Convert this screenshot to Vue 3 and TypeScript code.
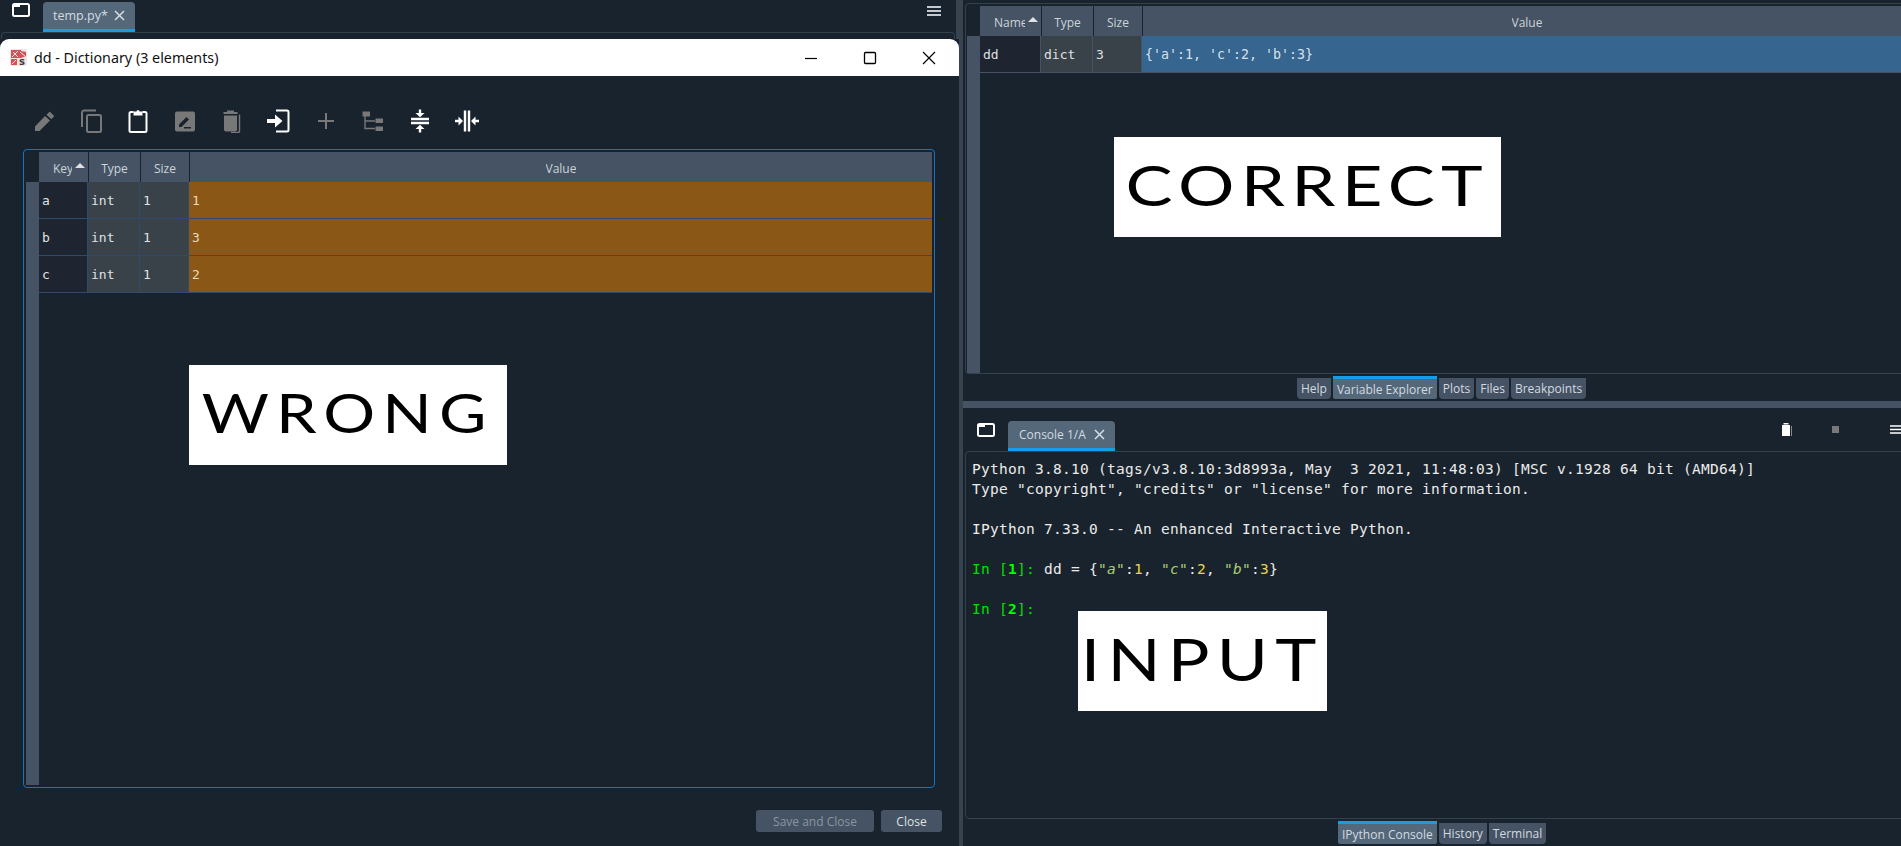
<template>
  <div class="ide">
    <!-- left editor pane, almost fully covered by the dialog -->
    <section class="left-pane">
      <div class="tabbar">
        <svg class="pane-icon" width="18" height="14" viewBox="0 0 18 14">
          <rect x="1" y="1" width="16" height="12" rx="1.5" fill="none" stroke="#fff" stroke-width="2" />
          <rect x="1" y="1" width="7" height="3" fill="#fff" />
        </svg>
        <div class="tab tab-editor">
          <span>temp.py*</span>
          <svg class="tab-close" width="11" height="11" viewBox="0 0 11 11">
            <path d="M1 1l9 9M10 1l-9 9" stroke="#d6dde4" stroke-width="1.5" />
          </svg>
        </div>
        <svg class="menu-icon" width="14" height="10" viewBox="0 0 14 10">
          <path d="M0 1h14M0 5h14M0 9h14" stroke="#fff" stroke-width="1.6" />
        </svg>
      </div>
      <div class="editor-frame"></div>
    </section>

    <div class="vsplit"></div>

    <section class="right-pane">
      <div class="top-area">
        <div class="var-frame">
          <div class="head-row var-cols-head">
            <div class="corner"></div>
            <div v-for="c in varHeaders" :key="c" class="head-cell" :class="{ 'head-value': c === 'Value', 'head-sort': c === 'Name' }">
              <span class="head-label">{{ c }}</span>
              <i v-if="c === 'Name'" class="sort-arrow"></i>
            </div>
          </div>
          <div class="table-body">
            <div class="vhead"></div>
            <div class="rows">
              <div v-for="r in varRows" :key="r.name" class="row var-cols-row">
                <div class="cell cell-key">{{ r.name }}</div>
                <div class="cell cell-meta">{{ r.type }}</div>
                <div class="cell cell-meta">{{ r.size }}</div>
                <div class="cell cell-blue">{{ r.value }}</div>
              </div>
            </div>
          </div>
          <div class="note note-correct"><span>CORRECT</span></div>
        </div>
        <div class="dock-tabs dock-tabs-top">
          <div v-for="t in topTabs" :key="t" class="dock-tab" :class="{ active: t === 'Variable Explorer' }">{{ t }}</div>
        </div>
      </div>

      <div class="hsplit"></div>

      <div class="console-area">
        <div class="tabbar console-bar">
          <svg class="pane-icon" width="18" height="14" viewBox="0 0 18 14">
            <rect x="1" y="1" width="16" height="12" rx="1.5" fill="none" stroke="#fff" stroke-width="2" />
            <rect x="1" y="1" width="7" height="3" fill="#fff" />
          </svg>
          <div class="tab tab-console">
            <span>Console 1/A</span>
            <svg class="tab-close" width="11" height="11" viewBox="0 0 11 11">
              <path d="M1 1l9 9M10 1l-9 9" stroke="#d6dde4" stroke-width="1.5" />
            </svg>
          </div>
          <div class="console-tools">
            <svg width="12" height="15" viewBox="0 0 12 15">
              <path d="M1 3h8v11H1z" fill="#fff" />
              <path d="M2.5 1h5v1.5h-5z" fill="#fff" />
              <path d="M10.500 4v10" stroke="#888" stroke-width="1" />
            </svg>
            <i class="stop-square"></i>
            <svg width="11" height="9" viewBox="0 0 11 9">
              <path d="M0 1h11M0 4.500h11M0 8h11" stroke="#fff" stroke-width="1.400" />
            </svg>
          </div>
        </div>
        <div class="console-frame">
          <pre class="console-text">Python 3.8.10 (tags/v3.8.10:3d8993a, May  3 2021, 11:48:03) [MSC v.1928 64 bit (AMD64)]
Type "copyright", "credits" or "license" for more information.

IPython 7.33.0 -- An enhanced Interactive Python.

<span class="prompt">In [<b>1</b>]:</span> dd = {<em>"a"</em>:<u>1</u>, <em>"c"</em>:<u>2</u>, <em>"b"</em>:<u>3</u>}

<span class="prompt">In [<b>2</b>]:</span></pre>
          <div class="note note-input"><span>INPUT</span></div>
        </div>
        <div class="dock-tabs dock-tabs-bottom">
          <div v-for="t in bottomTabs" :key="t" class="dock-tab" :class="{ active: t === 'IPython Console' }">{{ t }}</div>
        </div>
      </div>
    </section>

    <!-- floating dictionary editor window -->
    <div class="dialog">
      <div class="titlebar">
        <svg class="app-logo" width="17" height="17" viewBox="0 0 17 17">
          <rect width="17" height="17" rx="2" fill="#f6e4e4" />
          <path d="M1 1h10v8H1zM1 10h6v6H1zM11 2l5 1v4l-5 2z" fill="#d0555a" />
          <path d="M2 8l6-6M3 3l5 5M2 15l4-4M10 3l5 4" stroke="#f6e4e4" stroke-width="1" />
          <text x="9" y="16" class="logo-letter">s</text>
        </svg>
        <span class="title-text">dd - Dictionary (3 elements)</span>
        <div class="win-buttons">
          <svg width="14" height="14" viewBox="0 0 14 14"><path d="M1 7.500h12" stroke="#000" stroke-width="1.200" /></svg>
          <svg width="14" height="14" viewBox="0 0 14 14"><rect x="1.500" y="1.500" width="11" height="11" rx="1" fill="none" stroke="#000" stroke-width="1.300" /></svg>
          <svg width="14" height="14" viewBox="0 0 14 14"><path d="M1 1l12 12M13 1L1 13" stroke="#000" stroke-width="1.200" /></svg>
        </div>
      </div>

      <div class="toolbar">
        <!-- edit -->
        <svg class="tool" viewBox="0 0 24 24">
          <path class="off-fill" d="M3 17.500V22h4.500L18 11.500 13 7 3 17.500zM21.700 7.800a1 1 0 0 0 0-1.400l-3.300-3.200a1 1 0 0 0-1.400 0L14.500 5.700l4.800 4.600z" />
        </svg>
        <!-- copy -->
        <svg class="tool" viewBox="0 0 24 24">
          <path class="off-line" d="M17 1.500H5a2 2 0 0 0-2 2V18" />
          <rect class="off-line" x="8" y="6" width="14" height="17" rx="1.500" />
        </svg>
        <!-- paste -->
        <svg class="tool" viewBox="0 0 24 24">
          <path class="on-line" d="M7.500 3H5a1.500 1.500 0 0 0-1.500 1.500v17A1.500 1.500 0 0 0 5 23h14a1.500 1.500 0 0 0 1.500-1.500v-17A1.500 1.500 0 0 0 19 3h-2.500" />
          <path class="on-fill" d="M7.500 2.500h3a1.500 1.500 0 0 1 3 0h3V6.500h-9z" />
        </svg>
        <!-- rename -->
        <svg class="tool" viewBox="0 0 24 24">
          <rect class="off-fill" x="2" y="2.500" width="20" height="20" rx="2" />
          <path d="M6 15.500L13.500 8l2.500 2.500L8.500 18H6z" fill="#19232d" />
          <path d="M11 18h7v1.500h-7z" fill="#19232d" />
        </svg>
        <!-- delete -->
        <svg class="tool" viewBox="0 0 24 24">
          <path class="off-fill" d="M4 6.500h13v14a2 2 0 0 1-2 2H6a2 2 0 0 1-2-2z" />
          <path class="off-fill" d="M3.500 3h14v2h-14zM7 1.500h7V3H7z" />
          <path class="off-thin" d="M19.500 5.500V22a1.500 1.500 0 0 1-1.500 1.500h-7" />
        </svg>
        <!-- insert -->
        <svg class="tool" viewBox="0 0 24 24">
          <path class="on-line" d="M9 1.500h11a1.500 1.500 0 0 1 1.500 1.500v18a1.500 1.500 0 0 1-1.500 1.500H9" />
          <path class="on-fill" d="M0 10h8V5.500L15.500 12 8 18.500V14H0z" />
        </svg>
        <!-- add -->
        <svg class="tool" viewBox="0 0 24 24">
          <path class="off-line" d="M4 12h16M12 4v16" />
        </svg>
        <!-- tree -->
        <svg class="tool" viewBox="0 0 24 24">
          <path class="off-fill" d="M1.500 2.500h7.500v5H1.500zM14.500 9.500H22v4.500h-7.500zM14.500 17.500H22V22h-7.500z" />
          <path class="off-thin" d="M4 7v12.500h10M4 12h10" />
        </svg>
        <!-- collapse -->
        <svg class="tool" viewBox="0 0 24 24">
          <path class="on-thick" d="M3 10h18M3 14h18" />
          <path class="on-fill" d="M10.800 0.500h2.400v3.500h3.300L12 8.200 7.500 4h3.300zM10.800 23.500h2.400V20h3.300L12 15.800 7.500 20h3.300z" />
        </svg>
        <!-- expand -->
        <svg class="tool" viewBox="0 0 24 24">
          <path class="on-thick" d="M10 1.500v21M14 1.500v21" />
          <path class="on-fill" d="M0 10.800h3.500V7.500L8 12l-4.500 4.500v-3.300H0zM24 10.800h-3.500V7.500L16 12l4.500 4.500v-3.300H24z" />
        </svg>
      </div>

      <div class="dict-frame">
        <div class="head-row dict-cols-head">
          <div class="corner"></div>
          <div v-for="c in dictHeaders" :key="c" class="head-cell" :class="{ 'head-value': c === 'Value', 'head-sort': c === 'Key' }">
            <span class="head-label">{{ c }}</span>
            <i v-if="c === 'Key'" class="sort-arrow"></i>
          </div>
        </div>
        <div class="table-body">
          <div class="vhead"></div>
          <div class="rows">
            <div v-for="r in dictRows" :key="r.key" class="row row-dict dict-cols-row">
              <div class="cell cell-key">{{ r.key }}</div>
              <div class="cell cell-meta">{{ r.type }}</div>
              <div class="cell cell-meta">{{ r.size }}</div>
              <div class="cell cell-orange">{{ r.value }}</div>
            </div>
          </div>
        </div>
        <div class="note note-wrong"><span>WRONG</span></div>
      </div>

      <div class="dialog-actions">
        <button class="btn btn-disabled">Save and Close</button>
        <button class="btn">Close</button>
      </div>
    </div>
  </div>
</template>

<script setup lang="ts">
interface DictRow {
  key: string;
  type: string;
  size: number;
  value: number;
}

const dictHeaders = ["Key", "Type", "Size", "Value"];
const varHeaders = ["Name", "Type", "Size", "Value"];

const dictRows: DictRow[] = [
  { key: "a", type: "int", size: 1, value: 1 },
  { key: "b", type: "int", size: 1, value: 3 },
  { key: "c", type: "int", size: 1, value: 2 },
];

const varRows = [{ name: "dd", type: "dict", size: 3, value: "{'a':1, 'c':2, 'b':3}" }];

const topTabs = ["Help", "Variable Explorer", "Plots", "Files", "Breakpoints"];
const bottomTabs = ["IPython Console", "History", "Terminal"];
</script>

<style>
html,
body {
  margin: 0;
  background: #19232d;
  overflow: hidden;
}
</style>

<style scoped>
.ide {
  position: relative;
  width: 1901px;
  height: 846px;
  display: flex;
  overflow: hidden;
  background: #19232d;
  color: #e0e1e3;
  font-family: "Open Sans", "Noto Sans", sans-serif;
  font-size: 12px;
}

/* left pane */
.left-pane {
  width: 956px;
  flex: none;
}

.tabbar {
  display: flex;
  align-items: flex-start;
  height: 32px;
  padding-left: 12px;
}

.pane-icon {
  margin-top: 3px;
  flex: none;
}

.tab {
  display: flex;
  align-items: center;
  box-sizing: border-box;
  height: 30px;
  background: #54687a;
  border-bottom: 3px solid #1a9be8;
  border-radius: 4px 4px 0 0;
  color: #d3dae0;
  font-size: 12.500px;
}

.tab-editor {
  width: 92px;
  margin: 2px 0 0 13px;
  padding-left: 10px;
}

.tab-close {
  margin-left: auto;
  margin-right: 10px;
}

.menu-icon {
  margin: 6px 15px 0 auto;
}

.editor-frame {
  height: 20px;
  margin: 0 1px;
  border: 1px solid #32414b;
  border-bottom: 0;
  border-radius: 4px 4px 0 0;
}

.vsplit {
  width: 7px;
  flex: none;
  background: #37444f;
}

/* right pane */
.right-pane {
  flex: 1;
  min-width: 0;
  display: flex;
  flex-direction: column;
}

.top-area {
  height: 401px;
  box-sizing: border-box;
  padding-top: 3px;
  display: flex;
  flex-direction: column;
}

.var-frame {
  position: relative;
  height: 371px;
  box-sizing: border-box;
  margin: 0 -12px 0 2px;
  padding: 2px 1px 0;
  border: 1px solid #32414b;
  border-radius: 4px;
  display: flex;
  flex-direction: column;
}

.dict-frame {
  position: relative;
  height: 639px;
  box-sizing: border-box;
  margin: 0 24px 0 23px;
  padding: 2px;
  border: 1px solid #1a72bb;
  border-radius: 4px;
  display: flex;
  flex-direction: column;
}

.head-row,
.row {
  display: grid;
}

.dict-cols-head {
  grid-template-columns: 13px 50px 52px 49px 1fr;
}

.dict-cols-row {
  grid-template-columns: 49px 52px 49px 1fr;
}

.var-cols-head {
  grid-template-columns: 13px 62px 52px 49px 1fr;
}

.var-cols-row {
  grid-template-columns: 61px 52px 49px 1fr;
}

.head-row {
  height: 30px;
  flex: none;
}

.corner {
  background: #19232d;
}

.head-cell {
  position: relative;
  display: flex;
  align-items: center;
  justify-content: center;
  background: #455364;
  border-right: 1px solid #19232d;
  color: #ccd3da;
  padding-top: 2px;
  box-sizing: border-box;
}

.head-value {
  border-right: 0;
}

.head-sort {
  justify-content: flex-start;
  padding-left: 14px;
  overflow: hidden;
}

.head-label {
  display: block;
  overflow: hidden;
  white-space: nowrap;
}

.dict-cols-head .head-sort .head-label {
  width: 19px;
}

.var-cols-head .head-sort .head-label {
  width: 31px;
}

.sort-arrow {
  position: absolute;
  top: 11px;
  right: 3px;
  width: 0;
  height: 0;
  border-left: 5px solid transparent;
  border-right: 5px solid transparent;
  border-bottom: 5px solid #e0e1e3;
}

.table-body {
  flex: 1;
  display: flex;
  min-height: 0;
}

.vhead {
  width: 13px;
  flex: none;
  background: #455364;
}

.rows {
  flex: 1;
  min-width: 0;
}

.row {
  height: 37px;
  box-sizing: border-box;
  font-family: "DejaVu Sans Mono", "Liberation Mono", monospace;
  font-size: 13px;
}

.cell {
  display: flex;
  align-items: center;
  padding-left: 3px;
  border-bottom: 1px solid #455364;
  color: #dfe1e3;
  white-space: nowrap;
}

.row-dict .cell {
  border-bottom-color: #2f4a6b;
}

.cell-key {
  background: #1f2530;
  border-right: 1px solid #455364;
}

.cell-meta {
  background: #3a4249;
  border-right: 1px solid #455364;
}

.row-dict .cell-key,
.row-dict .cell-meta {
  border-right-color: #2f4a6b;
}

.cell-orange {
  background: #8a5716;
  color: #e8dcc0;
}

.cell-blue {
  background: #366590;
  font-size: 13.300px;
  color: #d5e0ea;
}

/* handwritten notes pasted over the screenshot */
.note {
  position: absolute;
  display: flex;
  align-items: center;
  justify-content: center;
  box-sizing: border-box;
  height: 100px;
  padding-bottom: 6px;
  background: #fff;
  color: #000;
  font-family: "Lato", "Noto Sans", sans-serif;
  font-weight: 400;
  white-space: nowrap;
  overflow: hidden;
}

.note span {
  display: block;
}

.note-wrong {
  left: 165px;
  top: 215px;
  width: 318px;
  font-size: 55px;
  letter-spacing: 6px;
}

.note-wrong span {
  transform: scaleX(1.18);
}

.note-correct {
  left: 148px;
  top: 133px;
  width: 387px;
  font-size: 56px;
  letter-spacing: 5px;
}

.note-correct span {
  transform: scaleX(1.26);
}

.note-input {
  left: 112px;
  top: 159px;
  width: 249px;
  font-size: 58px;
  letter-spacing: 6px;
}

.note-input span {
  transform: scaleX(1.2);
}

/* bottom tabs of each dock */
.dock-tabs {
  display: flex;
  align-items: flex-end;
  gap: 2px;
  height: 23px;
  color: #d3dae0;
}

.dock-tabs-top {
  margin-top: 2px;
  padding-left: 334px;
}

.dock-tabs-bottom {
  margin-top: 2px;
  padding-left: 375px;
}

.dock-tab {
  display: flex;
  align-items: center;
  box-sizing: border-box;
  height: 21px;
  padding: 0 4px;
  background: #455364;
  border-radius: 0 0 4px 4px;
  white-space: nowrap;
}

.dock-tab.active {
  height: 23px;
  background: #54687a;
  border-top: 3px solid #1a9be8;
  border-radius: 0 0 2px 2px;
}

.hsplit {
  height: 7px;
  flex: none;
  background: #455364;
}

/* console */
.console-area {
  flex: 1;
  display: flex;
  flex-direction: column;
  min-height: 0;
}

.console-bar {
  height: 43px;
  flex: none;
  padding-left: 14px;
}

.console-bar .pane-icon {
  margin-top: 15px;
}

.tab-console {
  width: 107px;
  margin: 13px 0 0 13px;
  padding-left: 11px;
  font-size: 12px;
}

.console-tools {
  display: flex;
  align-items: center;
  margin: 14px 0 0 auto;
  height: 14px;
}

.console-tools svg:first-child {
  margin-right: 39px;
}

.stop-square {
  width: 7px;
  height: 7px;
  margin-right: 51px;
  background: #787878;
}

.console-frame {
  position: relative;
  height: 368px;
  box-sizing: border-box;
  flex: none;
  margin: 0 -12px 0 2px;
  padding: 7px 6px;
  border: 1px solid #32414b;
  border-radius: 4px;
}

.console-text {
  margin: 0;
  font-family: "DejaVu Sans Mono", "Liberation Mono", monospace;
  font-size: 14.500px;
  letter-spacing: 0.270px;
  line-height: 20px;
  color: #ebebeb;
}

.console-text .prompt {
  color: #00e000;
}

.console-text .prompt b {
  color: #00ff00;
}

.console-text em {
  color: #a9cf72;
}

.console-text u {
  text-decoration: none;
  color: #e8d25c;
}

/* dialog */
.dialog {
  position: absolute;
  left: 0;
  top: 39px;
  width: 959px;
  height: 807px;
  background: #19232d;
  display: flex;
  flex-direction: column;
}

.titlebar {
  display: flex;
  align-items: center;
  flex: none;
  height: 37px;
  padding-left: 10px;
  background: #fff;
  border-radius: 9px 9px 0 0;
  color: #111;
}

.app-logo {
  flex: none;
}

.logo-letter {
  font-family: "DejaVu Sans", sans-serif;
  font-size: 10px;
  font-weight: 700;
  fill: #3a3a3a;
}

.title-text {
  margin-left: 7px;
  font-family: "Noto Sans", "Open Sans", sans-serif;
  font-size: 14.300px;
}

.win-buttons {
  display: flex;
  gap: 45px;
  margin-left: auto;
  padding-right: 23px;
}

.toolbar {
  display: flex;
  flex: none;
  gap: 23px;
  height: 73px;
  box-sizing: border-box;
  padding: 33px 0 0 32px;
}

.tool {
  width: 24px;
  height: 24px;
  flex: none;
}

.off-fill {
  fill: #787878;
}

.off-line {
  fill: none;
  stroke: #787878;
  stroke-width: 2;
}

.off-thin {
  fill: none;
  stroke: #787878;
  stroke-width: 1.400;
}

.on-fill {
  fill: #fff;
}

.on-line {
  fill: none;
  stroke: #fff;
  stroke-width: 2;
}

.on-thick {
  fill: none;
  stroke: #fff;
  stroke-width: 2.400;
}

.dialog-actions {
  display: flex;
  justify-content: flex-end;
  gap: 7px;
  margin-top: 22px;
  padding-right: 17px;
}

.btn {
  height: 22px;
  padding: 0;
  width: 61px;
  border: 0;
  border-radius: 3px;
  background: #455364;
  color: #dfe1e3;
  font-family: inherit;
  font-size: 12px;
}

.btn-disabled {
  width: 118px;
  color: #8a95a1;
}
</style>
